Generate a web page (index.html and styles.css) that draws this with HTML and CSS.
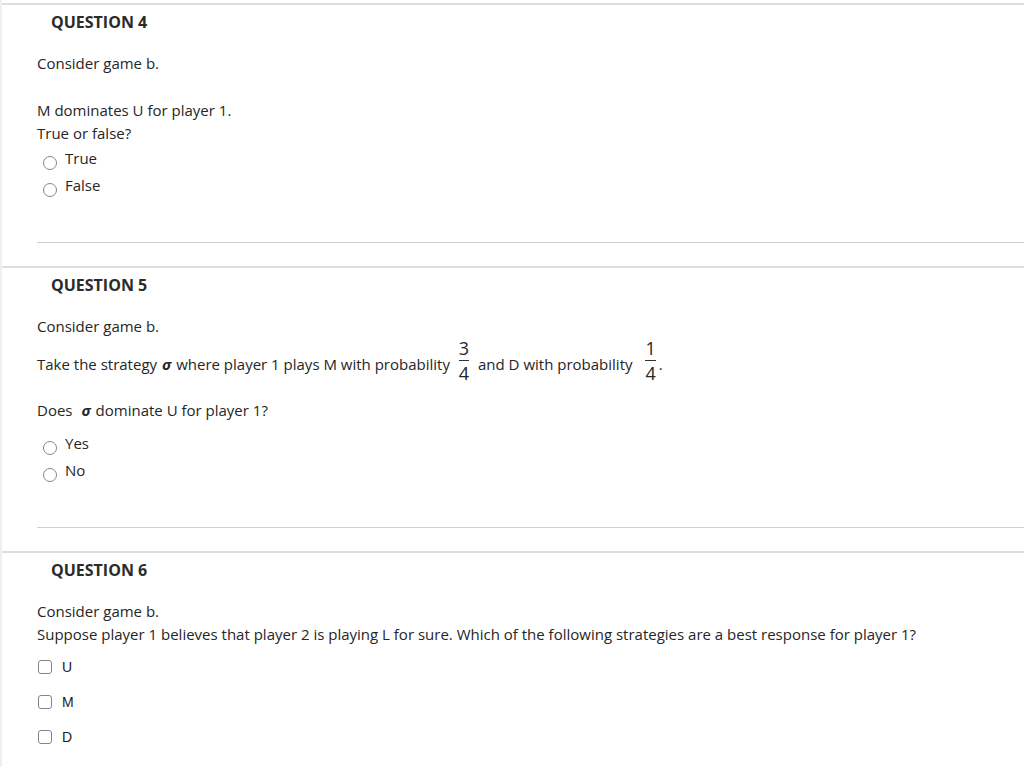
FILE: index.html
```html
<!DOCTYPE html>
<html>
<head>
<meta charset="utf-8">
<title>Questions</title>
<link rel="stylesheet" href="styles.css">
</head>
<body>
<div class="page">
  <section class="q">
    <h2 class="qtitle">QUESTION 4</h2>
    <div class="qbody">
      <p class="line consider">Consider game b.</p>
      <p class="line stmt">M dominates U for player 1.<br>True or false?</p>
      <ul class="opts">
        <li class="opt"><span class="radio"></span><span>True</span></li>
        <li class="opt"><span class="radio"></span><span>False</span></li>
      </ul>
    </div>
    <hr class="divider">
  </section>

  <section class="q">
    <h2 class="qtitle">QUESTION 5</h2>
    <div class="qbody">
      <p class="line consider">Consider game b.</p>
      <p class="line fracline">Take the strategy <span class="sig">σ</span> where player 1 plays M with probability <span class="frac"><span class="num">3</span><span class="bar"></span><span class="den">4</span></span> and D with probability <span class="frac frac2"><span class="num">1</span><span class="bar"></span><span class="den">4</span></span>.</p>
      <p class="line does">Does <span class="sig sig2">σ</span> dominate U for player 1?</p>
      <ul class="opts opts2">
        <li class="opt"><span class="radio"></span><span>Yes</span></li>
        <li class="opt"><span class="radio"></span><span>No</span></li>
      </ul>
    </div>
    <hr class="divider">
  </section>

  <section class="q">
    <h2 class="qtitle">QUESTION 6</h2>
    <div class="qbody">
      <p class="line consider">Consider game b.</p>
      <p class="line">Suppose player 1 believes that player 2 is playing L for sure. Which of the following strategies are a best response for player 1?</p>
      <ul class="checks">
        <li class="chk"><span class="box"></span><span>U</span></li>
        <li class="chk"><span class="box"></span><span>M</span></li>
        <li class="chk"><span class="box"></span><span>D</span></li>
      </ul>
    </div>
  </section>
</div>
</body>
</html>
```
FILE: styles.css
```css
* { box-sizing: border-box; }
html, body { margin: 0; padding: 0; background: #fff; }
body {
  font-family: "Open Sans", "Liberation Sans", sans-serif;
  font-size: 15px;
  color: #262626;
}
.page {
  border-left: 2px solid #efefef;
  padding-top: 3px;
  min-height: 767px;
}
.q { border-top: 2px solid #dedede; }
.qtitle {
  margin: 6px 0 0 49px;
  font-size: 16px;
  font-weight: 700;
  line-height: 22px;
  color: #2b2b2b;
}
.qbody { padding-left: 35px; }
.line { margin: 0; line-height: 23px; }
.consider { margin-top: 19px; }
.stmt { margin-top: 24px; }
.opts { list-style: none; margin: 0; padding: 0 0 0 6px; }
.opt { display: flex; align-items: flex-start; height: 27px; line-height: 27px; }
.radio {
  width: 14px; height: 14px;
  margin-top: 11px; margin-right: 8px;
  border: 1px solid #858585;
  border-radius: 50%;
  background: #fff;
  flex: none;
}
.divider {
  margin: 43px 0 23px 35px;
  border: 0;
  border-top: 1px solid #cfcfcf;
  height: 0;
}
.fracline { margin-top: 1px; }
.sig { font-weight: 700; font-style: italic; margin: 0 1px; }
.sig2 { margin-left: 5px; }
.frac {
  display: inline-flex;
  flex-direction: column;
  align-items: center;
  vertical-align: 15px;
  padding: 0 3px;
  margin: 0 2px;
}
.frac2 { margin-left: 6px; margin-right: 0; }
.num, .den { font-size: 18px; line-height: 18px; }
.bar { align-self: stretch; border-top: 1px solid #333; margin: 3px 0 3px; }
.does { margin-top: 17px; }
.opts2 { margin-top: 8px; }
.checks { list-style: none; margin: 3px 0 0; padding: 0 0 0 1px; }
.chk {
  display: flex; align-items: center; height: 35px;
  font-family: "Liberation Sans", Arial, sans-serif; font-size: 14px; color: #222;
}
.box {
  width: 14px; height: 14px;
  margin-right: 10px;
  border: 1px solid #858585;
  border-radius: 3px;
  background: #fff;
  flex: none;
}
```
